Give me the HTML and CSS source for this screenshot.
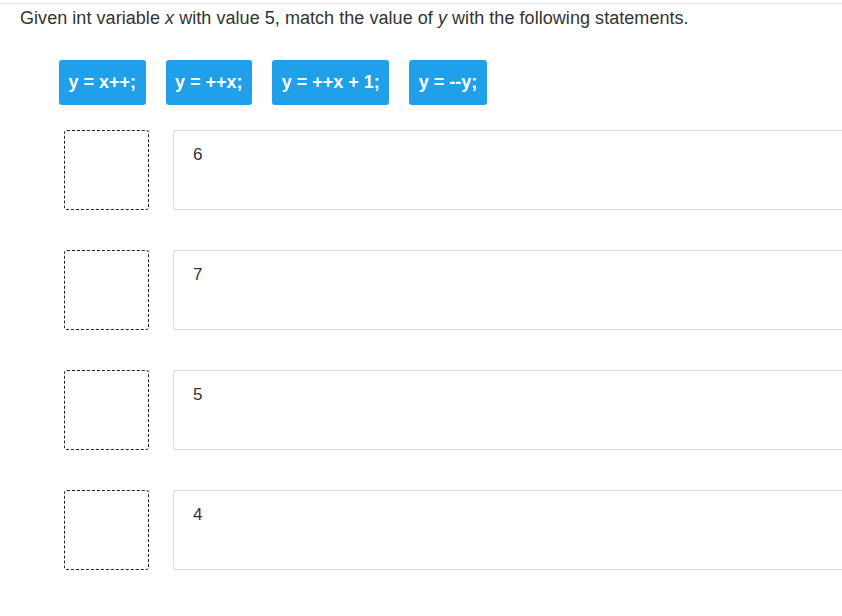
FILE: index.html
```html
<!DOCTYPE html>
<html>
<head>
<meta charset="utf-8">
<link rel="stylesheet" href="styles.css">
</head>
<body>
<div class="page">
  <p class="prompt">Given int variable <i>x</i> with value 5, match the value of <i>y</i> with the following statements.</p>
  <div class="choices">
    <div class="chip">y = x++;</div>
    <div class="chip">y = ++x;</div>
    <div class="chip">y = ++x + 1;</div>
    <div class="chip">y = --y;</div>
  </div>
  <div class="rows">
    <div class="row"><div class="drop"></div><div class="answer">6</div></div>
    <div class="row"><div class="drop"></div><div class="answer">7</div></div>
    <div class="row"><div class="drop"></div><div class="answer">5</div></div>
    <div class="row"><div class="drop"></div><div class="answer">4</div></div>
  </div>
</div>
</body>
</html>
```
FILE: styles.css
```css
html, body {
  margin: 0;
  padding: 0;
  background: #fff;
}
body {
  font-family: "Liberation Sans", Arial, sans-serif;
  color: #333;
  overflow: hidden;
}
.page {
  border-top: 1px solid #dddddd;
  margin-top: 3px;
}
.prompt {
  margin: 0;
  padding: 4px 0 0 20px;
  font-size: 18px;
  line-height: 21px;
  letter-spacing: 0.05px;
  color: #333;
}
.choices {
  display: flex;
  gap: 20px;
  padding: 31px 0 0 59px;
}
.chip {
  background: #1fa0e9;
  color: #fff;
  font-size: 18px;
  font-weight: bold;
  height: 45px;
  line-height: 45px;
  padding: 0 9.5px;
  border-radius: 3px;
}
.rows {
  display: flex;
  flex-direction: column;
  gap: 40px;
  padding: 25px 0 0 64px;
}
.row {
  display: flex;
  gap: 24px;
}
.drop {
  width: 83px;
  height: 78px;
  border: 1px dashed #222;
  border-radius: 3px;
  flex: none;
}
.answer {
  flex: 1;
  border: 1px solid #dcdcdc;
  border-right: none;
  border-radius: 3px 0 0 3px;
  padding: 14px 0 0 19px;
  height: 64px;
  font-size: 17px;
  line-height: 20px;
}
```
